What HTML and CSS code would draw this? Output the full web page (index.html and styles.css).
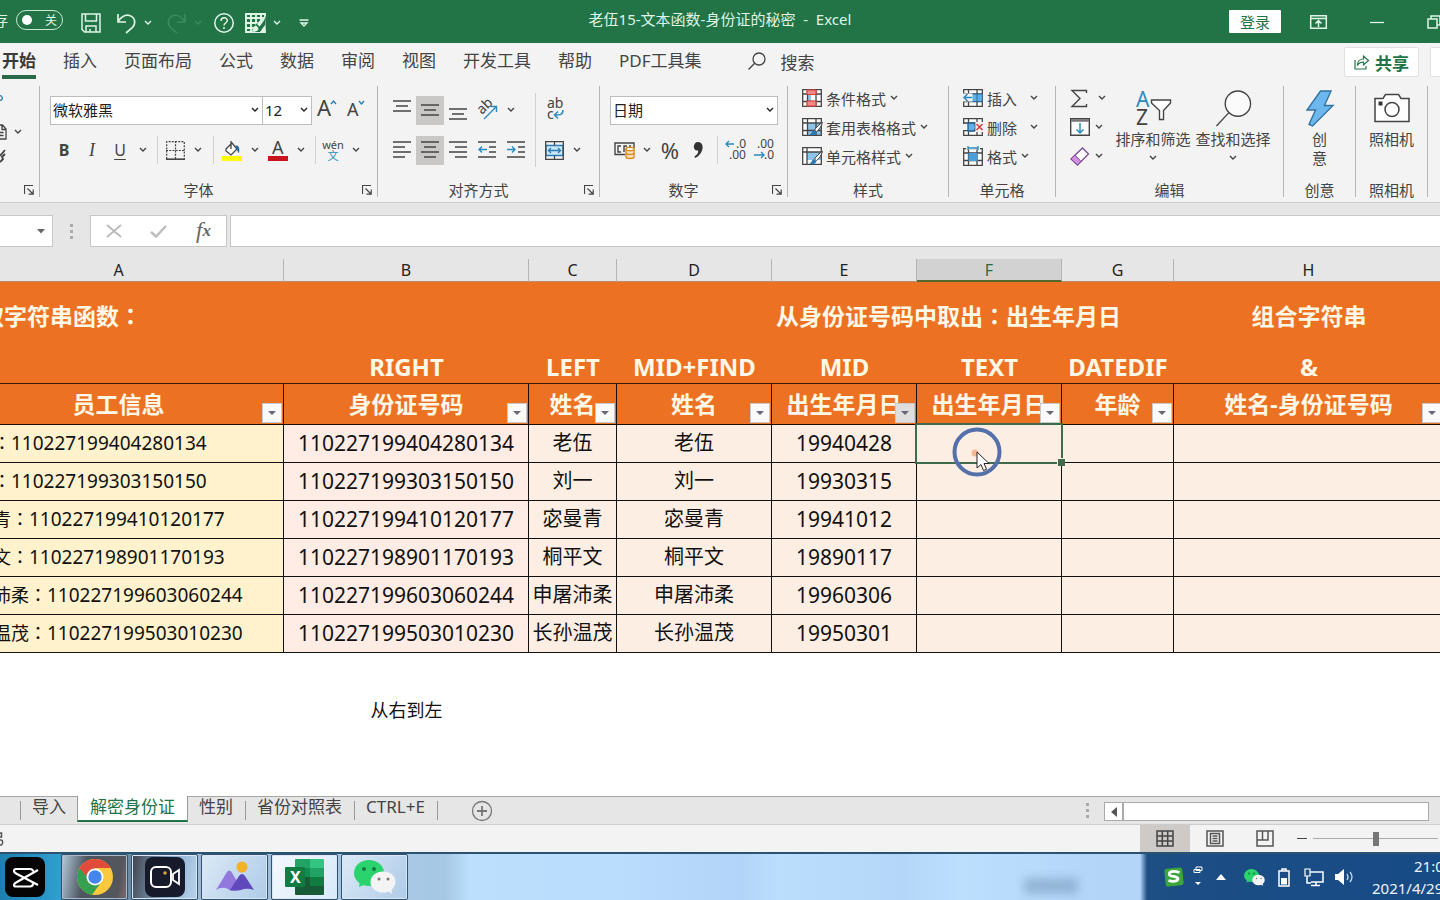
FILE: index.html
```html
<!DOCTYPE html>
<html lang="zh-CN">
<head>
<meta charset="utf-8">
<title>老伍15-文本函数-身份证的秘密 - Excel</title>
<link rel="stylesheet" href="styles.css">
</head>
<body>
<svg class="defs" aria-hidden="true">
  <symbol id="chev" viewBox="0 0 8 6"><path d="M1 1l3 3 3-3" fill="none" stroke="currentColor" stroke-width="1.4"/></symbol>
  <symbol id="launch" viewBox="0 0 10 10"><path d="M.5 9V.5H9M3.5 3.5l5 5M9.200 4.500V9.200H4.500" fill="none" stroke="currentColor" stroke-width="1.2"/></symbol>
  <symbol id="grid" viewBox="0 0 20 18"><path d="M.7 .7h18.600v16.600H.7zM.7 5h18.600M.7 12.500h18.600M5.500 .7v16.600M14 .7v16.600" fill="none" stroke="#444" stroke-width="1.300"/></symbol>
  <symbol id="brush" viewBox="0 0 14 14"><path d="M13.500.5c-3 1.500-6.500 5-8 7.500l2 1.800c2.500-2 5-6 6-9.300z" fill="#fff" stroke="#444"/><path d="M5 8.200c-2.500 0-1.500 3-4.500 4.300 2.500 1.500 6.500.8 6.800-2.500z" fill="#2b7bb9"/></symbol>
  <symbol id="wechat" viewBox="0 0 42 34"><ellipse cx="15" cy="13" rx="15" ry="13" fill="#2bd36f"/><path d="M6 21l-1 6 7-3z" fill="#2bd36f"/><circle cx="10" cy="9" r="2" fill="#187a41"/><circle cx="20" cy="9" r="2" fill="#187a41"/><ellipse cx="29" cy="22" rx="12.500" ry="10.500" fill="#f4f4f4"/><path d="M33 30l5 4-1-7z" fill="#f4f4f4"/><circle cx="25" cy="19" r="1.500" fill="#777"/><circle cx="34" cy="19" r="1.500" fill="#777"/></symbol>
</svg>

<header class="titlebar">
  <div class="quick">
    <span class="autosave">存</span>
    <button class="toggle" aria-label="自动保存"><i></i>关</button>
    <button class="qb save" aria-label="保存"><svg width="20" height="20" viewBox="0 0 20 20" fill="none" stroke="currentColor" stroke-width="1.500"><path d="M1 1h18v18H3.500L1 16.500zM4.500 1v7h11V1M5 19v-6h10v6M9 19v-3"/></svg></button>
    <button class="qb undo" aria-label="撤销"><svg width="19" height="21" viewBox="0 0 19 21" fill="none" stroke="currentColor" stroke-width="1.700"><path d="M1 1v8h8M1 8.500C5 3 9 1.500 12.500 2.500c6 2 6.500 8 3 12L9 20"/></svg></button>
    <button class="qc" aria-label="撤销列表"><svg width="8" height="6"><use href="#chev"/></svg></button>
    <button class="qb redo dim" aria-label="恢复"><svg width="19" height="21" viewBox="0 0 19 21" fill="none" stroke="currentColor" stroke-width="1.500"><path d="M18 1v8h-8M18 8.500C14 3 10 1.500 6.500 2.500c-6 2-6.500 8-3 12L10 20"/></svg></button>
    <button class="qc dim" aria-label="恢复列表"><svg width="8" height="6"><use href="#chev"/></svg></button>
    <button class="qb help" aria-label="帮助"><svg width="20" height="20" viewBox="0 0 20 20" fill="none" stroke="currentColor" stroke-width="1.500"><circle cx="10" cy="10" r="9.200"/><path d="M7 8c0-4.500 6.500-4 6.300-.5C13.200 10 10 10 10 12.500M10 14v2"/></svg></button>
    <button class="qb paint" aria-label="套用格式"><svg width="21" height="20" viewBox="0 0 21 20"><path d="M1 1h19v18H1zM1 5h19M1 10h19M1 15h19M6 1v18M11 1v18M16 1v18" fill="none" stroke="currentColor" stroke-width="1.900"/><path d="M21 3L10 12l-3 7h13z" fill="#227447"/><path d="M21 3c-4 2-7 5-9 8l2.500 2.500C17 11 19.500 7 21 3zM11 12.500c-3 .5-2 4-5 6 4 1 7.500 0 7.500-3.500zM15 19l5-7v7z" fill="currentColor"/></svg></button>
    <button class="qc" aria-label="更多格式"><svg width="8" height="6"><use href="#chev"/></svg></button>
    <button class="qb custom" aria-label="自定义快速访问工具栏"><svg width="10" height="8" viewBox="0 0 10 8" fill="none" stroke="currentColor" stroke-width="1.300"><path d="M.5 1h9M2 4l3 3 3-3z"/></svg></button>
  </div>
  <h1 class="doc">老伍15-文本函数-身份证的秘密&nbsp; -&nbsp; Excel</h1>
  <div class="window">
    <button class="login">登录</button>
    <button class="wb" aria-label="功能区显示选项"><svg width="17" height="14" viewBox="0 0 17 14" fill="none" stroke="currentColor" stroke-width="1.500"><path d="M.7 .7h15.600v12.600H.7zM.7 3.500h15.600M8.500 12V6M5.500 8.500l3-3 3 3"/></svg></button>
    <button class="wb" aria-label="最小化"><svg width="14" height="14" viewBox="0 0 14 14"><path d="M0 7.500h14" stroke="currentColor" stroke-width="1.300"/></svg></button>
    <button class="wb" aria-label="还原"><svg width="14" height="14" viewBox="0 0 14 14" fill="none" stroke="currentColor" stroke-width="1.500"><path d="M1 4h9v9H1zM4 4V1h9v9h-3"/></svg></button>
  </div>
</header>

<nav class="tabs">
  <a class="tab on" href="#">开始</a><a class="tab" href="#">插入</a><a class="tab" href="#">页面布局</a><a class="tab" href="#">公式</a><a class="tab" href="#">数据</a><a class="tab" href="#">审阅</a><a class="tab" href="#">视图</a><a class="tab" href="#">开发工具</a><a class="tab" href="#">帮助</a><a class="tab" href="#">PDF工具集</a>
  <button class="search"><svg width="18" height="18" viewBox="0 0 18 18" fill="none" stroke="currentColor" stroke-width="1.300"><circle cx="11" cy="7" r="6"/><path d="M6.700 11.300L.5 17.500"/></svg>搜索</button>
  <button class="share"><svg width="15" height="15" viewBox="0 0 15 15" fill="none" stroke="currentColor" stroke-width="1.200"><path d="M1 5v9h11v-3M3.500 10c0-4 3-6 6-6V1l5 4.500-5 4.500V7C7 7 5 8 3.500 10z"/></svg>共享</button>
  <button class="comment" aria-label="批注"></button>
</nav>

<section class="ribbon">
  <div class="group g-clip">
    <div class="rows three">
      <button class="cut" aria-label="剪切"><svg width="4" height="6" viewBox="0 0 4 6"><circle cx="0" cy="3" r="2.300" fill="none" stroke="#2b7bb9" stroke-width="1.300"/></svg></button>
      <button class="copy" aria-label="复制"><svg width="7" height="16" viewBox="0 0 7 16" fill="none" stroke="#444" stroke-width="1.300"><path d="M-2 1h4.500L6 5v10h-8M2 1v4.500h4M-1 8.500h4.500M-1 11.500h4.500"/></svg><svg class="chev" width="8" height="6"><use href="#chev"/></svg></button>
      <button class="cut" aria-label="格式刷"><svg width="6" height="14" viewBox="0 0 6 14"><path d="M5 1L0 7M5 5L2 8l1 2-3 3" fill="none" stroke="#444" stroke-width="1.800"/></svg></button>
    </div>
    <div class="foot"><span></span><button aria-label="剪贴板设置"><svg width="10" height="10"><use href="#launch"/></svg></button></div>
  </div>

  <div class="group g-font">
    <div class="rows two">
      <div class="row">
        <label class="combo face"><select aria-label="字体"><option>微软雅黑</option></select><svg width="8" height="6"><use href="#chev"/></svg></label>
        <label class="combo size"><select aria-label="字号"><option>12</option></select><svg width="8" height="6"><use href="#chev"/></svg></label>
        <button class="b30" aria-label="增大字号"><svg width="20" height="22" viewBox="0 0 20 22"><text x="0" y="17" font-size="22" fill="#444">A</text><path d="M14 5l2.500-3L19 5" fill="none" stroke="#2b7bb9" stroke-width="1.400"/></svg></button>
        <button class="b28" aria-label="减小字号"><svg width="18" height="22" viewBox="0 0 18 22"><text x="0" y="17" font-size="18" fill="#444">A</text><path d="M12 2l2.500 3L17 2" fill="none" stroke="#2b7bb9" stroke-width="1.400"/></svg></button>
      </div>
      <div class="row">
        <button class="b28 bold">B</button><button class="b28 ital">I</button><button class="b28 under">U</button>
        <button class="b18" aria-label="下划线"><svg width="8" height="6"><use href="#chev"/></svg></button><i class="sep"></i>
        <button class="b26" aria-label="边框"><svg width="19" height="19" viewBox="0 0 19 19" fill="none" stroke="#444"><path d="M.7 18V.7h17.600V18M9.500 0v18M0 9.500h19" stroke-dasharray="2 1.200" stroke-width="1.200"/><path d="M0 18.200h19" stroke-width="1.600"/></svg></button>
        <button class="b20" aria-label="边框列表"><svg width="8" height="6"><use href="#chev"/></svg></button><i class="sep"></i>
        <button class="b28" aria-label="填充颜色"><svg width="20" height="21" viewBox="0 0 20 21"><path d="M4 9l6-6 5 6-6 6-5-4zM9 9V1" fill="#fff" stroke="#444" stroke-width="1.300"/><path d="M13 6c4-2 5 3 4 7-2-1-2-5-4-7z" fill="#2b6ca3"/><path d="M0 16h20v5H0z" fill="#fdf90c"/></svg></button>
        <button class="b18" aria-label="填充颜色列表"><svg width="8" height="6"><use href="#chev"/></svg></button>
        <button class="b28" aria-label="字体颜色"><svg width="20" height="21" viewBox="0 0 20 21"><text x="4" y="14" font-size="18" fill="#444">A</text><path d="M0 16h20v5H0z" fill="#c8141c"/></svg></button>
        <button class="b18" aria-label="字体颜色列表"><svg width="8" height="6"><use href="#chev"/></svg></button><i class="sep"></i>
        <button class="b26 pinyin"><span>wén</span><b>文</b></button>
        <button class="b20" aria-label="拼音列表"><svg width="8" height="6"><use href="#chev"/></svg></button>
      </div>
    </div>
    <div class="foot"><span>字体</span><button aria-label="字体设置"><svg width="10" height="10"><use href="#launch"/></svg></button></div>
  </div>

  <div class="group g-align">
    <div class="split">
      <div class="rows two">
        <div class="row">
          <button class="b28" aria-label="顶端对齐"><svg width="18" height="20" viewBox="0 0 18 20" stroke="#444" stroke-width="1.400"><path d="M0 1h18M3 6h12M0 11h18"/></svg></button>
          <button class="b28 sel" aria-label="垂直居中"><svg width="18" height="20" viewBox="0 0 18 20" stroke="#444" stroke-width="1.400"><path d="M0 5h18M3 10h12M0 15h18"/></svg></button>
          <button class="b28" aria-label="底端对齐"><svg width="18" height="20" viewBox="0 0 18 20" stroke="#444" stroke-width="1.400"><path d="M0 9h18M3 14h12M0 19h18"/></svg></button>
          <button class="b30" aria-label="方向"><svg width="22" height="22" viewBox="0 0 22 22"><text transform="translate(6 16) rotate(-45)" font-size="14" fill="#444">ab</text><path d="M8 20L20 8M15 7.500h5.500V13" fill="none" stroke="#2b8ac0" stroke-width="1.400"/></svg></button>
          <button class="b18" aria-label="方向列表"><svg width="8" height="6"><use href="#chev"/></svg></button>
        </div>
        <div class="row">
          <button class="b28" aria-label="左对齐"><svg width="18" height="18" viewBox="0 0 18 18" stroke="#444" stroke-width="1.400"><path d="M0 1h18M0 6h12M0 11h18M0 16h12"/></svg></button>
          <button class="b28 sel" aria-label="居中"><svg width="18" height="18" viewBox="0 0 18 18" stroke="#444" stroke-width="1.400"><path d="M0 1h18M3 6h12M0 11h18M3 16h12"/></svg></button>
          <button class="b28" aria-label="右对齐"><svg width="18" height="18" viewBox="0 0 18 18" stroke="#444" stroke-width="1.400"><path d="M0 1h18M6 6h12M0 11h18M6 16h12"/></svg></button>
          <button class="b30" aria-label="减少缩进"><svg width="18" height="18" viewBox="0 0 18 18" fill="none" stroke="#444" stroke-width="1.400"><path d="M0 1h18M11 6h7M11 11h7M0 16h18"/><path d="M9 8.500H1M4 5.500l-3 3 3 3" stroke="#2b8ac0"/></svg></button>
          <button class="b28" aria-label="增加缩进"><svg width="18" height="18" viewBox="0 0 18 18" fill="none" stroke="#444" stroke-width="1.400"><path d="M0 1h18M11 6h7M11 11h7M0 16h18"/><path d="M0 8.500h8M5 5.500l3 3-3 3" stroke="#2b8ac0"/></svg></button>
        </div>
      </div>
      <i class="sep tall"></i>
      <div class="rows two">
        <div class="row"><button class="b30" aria-label="自动换行"><svg width="20" height="22" viewBox="0 0 20 22"><text x="2" y="9" font-size="14" fill="#444">ab</text><text x="2" y="20" font-size="14" fill="#444">c</text><path d="M18 11c0 5-3 5-8 5M13 12.500L9.500 16l3.500 3.500" fill="none" stroke="#2b8ac0" stroke-width="1.500"/></svg></button></div>
        <div class="row"><button class="b28" aria-label="合并后居中"><svg width="19" height="19" viewBox="0 0 19 19" fill="none" stroke="#444" stroke-width="1.300"><path d="M1 4.500h17v10H1z" fill="#c9e6f5" stroke="#2b7bb9"/><path d="M.7 .7h17.600v17.600H.7zM9.500 .7v3.800M9.500 14.500v3.800"/><path d="M3.500 9.500h12M6 7L3.500 9.500 6 12M13 7l2.500 2.500L13 12" stroke="#2b7bb9"/></svg></button><button class="b18" aria-label="合并列表"><svg width="8" height="6"><use href="#chev"/></svg></button></div>
      </div>
    </div>
    <div class="foot"><span>对齐方式</span><button aria-label="对齐设置"><svg width="10" height="10"><use href="#launch"/></svg></button></div>
  </div>

  <div class="group g-num">
    <div class="rows two">
      <div class="row"><label class="combo fmt"><select aria-label="数字格式"><option>日期</option></select><svg width="8" height="6"><use href="#chev"/></svg></label></div>
      <div class="row">
        <button class="b28" aria-label="会计数字格式"><svg width="21" height="18" viewBox="0 0 21 18" fill="none" stroke="#444" stroke-width="1.400"><path d="M11 13.500H1V2h19v5M7 5H4v6h3M10 11V5h3M15 5h2"/><path d="M12 8v8c0 2 8 2 8 0V8z" fill="#fce3bd" stroke="#d98b25"/><ellipse cx="16" cy="8" rx="4" ry="1.700" fill="#fff" stroke="#d98b25"/><path d="M12 12c0 2 8 2 8 0" stroke="#d98b25"/></svg></button>
        <button class="b18" aria-label="会计格式列表"><svg width="8" height="6"><use href="#chev"/></svg></button>
        <button class="b28 pct">%</button>
        <button class="b28" aria-label="千位分隔样式"><svg width="10" height="18" viewBox="0 0 10 18"><path d="M5 1c7 0 6 12-3 16l-.5-1.500C5 13 5.500 11 5 9.500-1 10 0 1 5 1z" fill="#333"/></svg></button><i class="sep"></i>
        <button class="b28" aria-label="增加小数位数"><svg width="22" height="22" viewBox="0 0 22 22"><text x="11" y="9" font-size="12" fill="#444">.0</text><text x="4" y="20" font-size="12" fill="#444">.00</text><path d="M9 5H1M4 2L1 5l3 3" fill="none" stroke="#2b8ac0" stroke-width="1.400"/></svg></button>
        <button class="b28" aria-label="减少小数位数"><svg width="22" height="22" viewBox="0 0 22 22"><text x="4" y="9" font-size="12" fill="#444">.00</text><text x="11" y="20" font-size="12" fill="#444">.0</text><path d="M1 16h10M8 13l3 3-3 3" fill="none" stroke="#2b8ac0" stroke-width="1.400"/></svg></button>
      </div>
    </div>
    <div class="foot"><span>数字</span><button aria-label="数字设置"><svg width="10" height="10"><use href="#launch"/></svg></button></div>
  </div>

  <div class="group g-style">
    <div class="rows three">
      <button class="item"><svg width="20" height="18" viewBox="0 0 20 18"><path d="M1 1h18v16H1z" fill="#fff"/><path d="M5.500 5h3.500v7.500H5.500z" fill="#8cc4ea"/><use href="#grid"/><path d="M5 1h9v4.500H5zM5 12h9v5H5z" fill="#f08a86" stroke="#d9403c" stroke-width="1.200"/></svg>条件格式<svg width="8" height="6"><use href="#chev"/></svg></button>
      <button class="item"><svg width="20" height="18" viewBox="0 0 20 18"><path d="M1 1h18v16H1z" fill="#fff"/><path d="M5 5h14v12H5z" fill="#8cc4ea"/><use href="#grid"/><use href="#brush" x="7" y="4" width="14" height="14"/></svg>套用表格格式<svg width="8" height="6"><use href="#chev"/></svg></button>
      <button class="item"><svg width="20" height="18" viewBox="0 0 20 18"><path d="M1 1h18v16H1z" fill="#fff"/><path d="M5 5h14v8H5z" fill="#8cc4ea"/><path d="M.7 .7h18.600v16.600H.7zM.7 5h18.600M5 .7v16.600" fill="none" stroke="#444" stroke-width="1.300"/><use href="#brush" x="7" y="4" width="14" height="14"/></svg>单元格样式<svg width="8" height="6"><use href="#chev"/></svg></button>
    </div>
    <div class="foot"><span>样式</span></div>
  </div>

  <div class="group g-cell">
    <div class="rows three">
      <button class="item wide"><svg width="20" height="18" viewBox="0 0 20 18"><path d="M1 1h18v16H1z" fill="#fff"/><use href="#grid"/><path d="M8 5h11.300v7.500H8z" fill="#5fb0e6" stroke="#2b6ca3"/><path d="M14 5v7.500" stroke="#2b6ca3"/><path d="M0 4.500h9.500v8H0z" fill="#f3f3f3"/><path d="M9 8.500H1M4.500 5L1 8.500 4.500 12" fill="none" stroke="#2b8ac0" stroke-width="1.500"/></svg>插入<svg width="8" height="6"><use href="#chev"/></svg></button>
      <button class="item wide"><svg width="20" height="18" viewBox="0 0 20 18"><path d="M1 1h18v16H1z" fill="#fff"/><use href="#grid"/><path d="M0 6h5v6H0z" fill="#f3f3f3"/><path d="M5 5h6l2 4-2 4H5z" fill="#5fb0e6" stroke="#235f8f" stroke-width="1.300"/><path d="M12.500 4H20v10h-7.500z" fill="#f3f3f3"/><path d="M13.500 6l6 6M19.500 6l-6 6" stroke="#df3b3b" stroke-width="1.500"/></svg>删除<svg width="8" height="6"><use href="#chev"/></svg></button>
      <button class="item"><svg width="20" height="20" viewBox="0 0 20 20"><path d="M1 4h18v15H1z" fill="#fff"/><use href="#grid" y="2" width="20" height="18"/><path d="M5.500 7h9v8h-9z" fill="#4a9fdb"/><path d="M3 0h14v3.500H3z" fill="#f3f3f3"/><path d="M5 2h10M5 0v4M15 0v4" stroke="#2b8ac0" stroke-width="1.300"/></svg>格式<svg width="8" height="6"><use href="#chev"/></svg></button>
    </div>
    <div class="foot"><span>单元格</span></div>
  </div>

  <div class="group g-edit">
    <div class="split">
      <div class="rows three">
        <button class="item sum" aria-label="自动求和"><svg width="18" height="19" viewBox="0 0 18 19"><path d="M16.500 4V1.500H2L10 9.500 2 17.500h14.500V15" fill="none" stroke="#444" stroke-width="1.400"/></svg><svg width="8" height="6"><use href="#chev"/></svg></button>
        <button class="item" aria-label="填充"><svg width="20" height="18" viewBox="0 0 20 18" fill="none"><path d="M.7 .7h18.600v16.600H.7z" fill="#fff" stroke="#444" stroke-width="1.400"/><path d="M1 2.500h18" stroke="#777" stroke-width="2.500"/><path d="M10 5v10M6.500 11.500L10 15l3.500-3.500" stroke="#2b8ac0" stroke-width="1.500"/></svg><svg width="8" height="6"><use href="#chev"/></svg></button>
        <button class="item" aria-label="清除"><svg width="20" height="19" viewBox="0 0 20 19"><path d="M1 12L12.500 1l6 6L7.500 18z" fill="#fff" stroke="#7a4d92" stroke-width="1.300"/><path d="M1 12l4-4 6 6.500-3.500 3.500z" fill="#d28fe0" stroke="#7a4d92"/></svg><svg width="8" height="6"><use href="#chev"/></svg></button>
      </div>
      <button class="big"><svg width="37" height="36" viewBox="0 0 37 36"><text x="1" y="16" font-size="21" fill="#2b8ac0">A</text><text x="1" y="34" font-size="21" fill="#444">Z</text><path d="M16.500 9.500h19v3l-7 7.500v9h-4v-9l-8-7.500z" fill="#fff" stroke="#444" stroke-width="1.400"/></svg>排序和筛选<svg width="8" height="6"><use href="#chev"/></svg></button>
      <button class="big"><svg width="37" height="38" viewBox="0 0 37 38" fill="none" stroke="#444" stroke-width="1.400"><circle cx="23" cy="14" r="13" fill="#fbfbfb"/><path d="M14 23L1 37"/></svg>查找和选择<svg width="8" height="6"><use href="#chev"/></svg></button>
    </div>
    <div class="foot"><span>编辑</span></div>
  </div>

  <div class="group g-idea">
    <button class="big"><svg width="28" height="37" viewBox="0 0 28 37"><path d="M14.500 1H25l-6.500 14.500H27L6.500 36 3 34.500 9.500 20H1z" fill="#6cb8ee" stroke="#33739f" stroke-width="1.400"/></svg>创<br>意</button>
    <div class="foot"><span>创意</span></div>
  </div>

  <div class="group g-cam">
    <button class="big"><svg width="36" height="30" viewBox="0 0 36 30" fill="none" stroke="#444" stroke-width="1.500"><path d="M1 5h8l2.500-4h13L27 5h8v23H1z" fill="#fff"/><circle cx="18" cy="16" r="7"/><path d="M4.500 8h4v4h-4z" fill="#333" stroke="none"/></svg>照相机</button>
    <div class="foot"><span>照相机</span></div>
  </div>
</section>

<section class="formula">
  <button class="name" aria-label="名称框"><svg width="8" height="5" viewBox="0 0 8 5"><path d="M0 0h8L4 4.500z" fill="#666"/></svg></button>
  <span class="dots"><i></i><i></i><i></i></span>
  <div class="fx">
    <button aria-label="取消"><svg width="16" height="14" viewBox="0 0 16 14"><path d="M1 1l14 12M15 1L1 13" stroke="#b9b9b9" stroke-width="1.800"/></svg></button>
    <button aria-label="输入"><svg width="17" height="13" viewBox="0 0 17 13"><path d="M1 7l5 4.500L16 1" fill="none" stroke="#bdbdbd" stroke-width="2.500"/></svg></button>
    <button class="fn"><i>f</i>x</button>
  </div>
  <input class="bar" type="text" aria-label="编辑栏">
</section>

<main class="sheet">
  <table>
    <colgroup><col class="ca"><col class="cb"><col class="cc"><col class="cd"><col class="ce"><col class="ce"><col class="cg"><col></colgroup>
    <thead>
      <tr class="letters"><th>A</th><th>B</th><th>C</th><th>D</th><th>E</th><th class="cur">F</th><th>G</th><th>H</th></tr>
    </thead>
    <tbody>
      <tr class="t1"><td class="left" colspan="4">提取字符串函数<span class="colon" lang="zh-TW">：</span></td><td class="left" colspan="3">从身份证号码中取出<span class="colon" lang="zh-TW">：</span>出生年月日</td><td>组合字符串</td></tr>
      <tr class="t2"><td></td><td>RIGHT</td><td>LEFT</td><td>MID+FIND</td><td>MID</td><td>TEXT</td><td>DATEDIF</td><td>&amp;</td></tr>
      <tr class="t3">
        <td>员工信息<button class="filter" aria-label="筛选"></button></td><td>身份证号码<button class="filter" aria-label="筛选"></button></td><td>姓名<button class="filter" aria-label="筛选"></button></td><td>姓名<button class="filter" aria-label="筛选"></button></td><td>出生年月日<button class="filter hot" aria-label="筛选"></button></td><td>出生年月日<button class="filter" aria-label="筛选"></button></td><td>年龄<button class="filter" aria-label="筛选"></button></td><td>姓名-身份证号码<button class="filter" aria-label="筛选"></button></td>
      </tr>
      <tr class="d"><td>老伍<span class="colon" lang="zh-TW">：</span><span class="n">110227199404280134</span></td><td>110227199404280134</td><td>老伍</td><td>老伍</td><td>19940428</td>
        <td><div class="selection"></div><svg class="pointer" width="50" height="50" viewBox="0 0 50 50"><circle cx="25" cy="25" r="22.500" fill="none" stroke="#5470aa" stroke-width="4"/><circle cx="23" cy="26" r="3.500" fill="#f5b795"/><path d="M25 25v16l4-3.500 2.500 6 3-1.300-2.500-5.700h5z" fill="#fff" stroke="#222"/></svg></td><td></td><td></td></tr>
      <tr class="d"><td>刘一<span class="colon" lang="zh-TW">：</span><span class="n">110227199303150150</span></td><td>110227199303150150</td><td>刘一</td><td>刘一</td><td>19930315</td><td></td><td></td><td></td></tr>
      <tr class="d"><td>宓曼青<span class="colon" lang="zh-TW">：</span><span class="n">110227199410120177</span></td><td>110227199410120177</td><td>宓曼青</td><td>宓曼青</td><td>19941012</td><td></td><td></td><td></td></tr>
      <tr class="d"><td>桐平文<span class="colon" lang="zh-TW">：</span><span class="n">110227198901170193</span></td><td>110227198901170193</td><td>桐平文</td><td>桐平文</td><td>19890117</td><td></td><td></td><td></td></tr>
      <tr class="d"><td>申屠沛柔<span class="colon" lang="zh-TW">：</span><span class="n">110227199603060244</span></td><td>110227199603060244</td><td>申屠沛柔</td><td>申屠沛柔</td><td>19960306</td><td></td><td></td><td></td></tr>
      <tr class="d"><td>长孙温茂<span class="colon" lang="zh-TW">：</span><span class="n">110227199503010230</span></td><td>110227199503010230</td><td>长孙温茂</td><td>长孙温茂</td><td>19950301</td><td></td><td></td><td></td></tr>
      <tr class="blank"><td colspan="8"></td></tr>
      <tr class="blank"><td></td><td>从右到左</td><td colspan="6"></td></tr>
    </tbody>
  </table>
</main>

<nav class="sheets">
  <span class="edge"></span>
  <a href="#">导入</a><a class="on" href="#">解密身份证</a><a class="rule" href="#">性别</a><a class="rule" href="#">省份对照表</a><a class="rule" href="#">CTRL+E</a>
  <button class="add" aria-label="新工作表"><svg width="22" height="22" viewBox="0 0 22 22" fill="none" stroke="#777" stroke-width="1.300"><circle cx="11" cy="11" r="9.500"/><path d="M11 6v10M6 11h10" stroke-width="1.800"/></svg></button>
  <span class="dots"><i></i><i></i><i></i></span>
  <div class="hscroll"><button aria-label="向左滚动"><svg width="6" height="10" viewBox="0 0 6 10"><path d="M6 0v10L0 5z" fill="#555"/></svg></button><div class="thumb"></div></div>
</nav>

<footer class="status">
  <svg class="macro" width="4" height="16" viewBox="0 0 4 16"><path d="M0 2h1.500v4H0M0 9c4-1 3 6 0 5" fill="none" stroke="#555" stroke-width="1.500"/></svg>
  <button class="view on" aria-label="普通"><svg width="18" height="17" viewBox="0 0 18 17" fill="none" stroke="#444" stroke-width="1.500"><path d="M1 1h16v15H1zM1 6h16M1 11h16M6.300 1v15M11.700 1v15"/></svg></button>
  <button class="view" aria-label="页面布局"><svg width="18" height="17" viewBox="0 0 18 17" fill="none" stroke="#555" stroke-width="1.500"><path d="M1 1h16v15H1zM4.500 3.500h9v10h-9zM6.500 6h5M6.500 8.500h5M6.500 11h5"/></svg></button>
  <button class="view" aria-label="分页预览"><svg width="18" height="17" viewBox="0 0 18 17" fill="none" stroke="#555" stroke-width="1.500"><path d="M1 1h16v15H1zM1 10h11V1M6.500 1v9"/></svg></button>
  <button class="minus" aria-label="缩小"></button>
  <input class="zoom" type="range" min="0" max="100" value="50" aria-label="缩放">
</footer>

<footer class="taskbar">
  <button class="app first" aria-label="剪映"><svg width="40" height="40" viewBox="0 0 40 40"><rect width="40" height="40" rx="8" fill="#050505"/><path d="M33 13L12 25q-3 1.500-3 3 0 1.500 2 1.500h14q3 0 3-3M33 28L12 17q-3-1.500-3-3 0-2 2-2h14q3 0 3 2.500" fill="none" stroke="#fff" stroke-width="2.200"/></svg></button>
  <button class="app dark" aria-label="Chrome"><svg width="36" height="38" viewBox="0 0 36 36"><circle cx="18" cy="18" r="18" fill="#fbc93b"/><path d="M18 18L2.400 9A18 18 0 0 0 15 35.800L25 22z" fill="#35a04f"/><path d="M2.400 9A18 18 0 0 1 33.600 9H18l-8 9z" fill="#e14b3c"/><circle cx="18" cy="18" r="8.500" fill="#fff"/><circle cx="18" cy="18" r="6.700" fill="#4485ee"/></svg></button>
  <button class="app mid" aria-label="录屏"><svg width="40" height="40" viewBox="0 0 40 40"><rect width="40" height="40" rx="8" fill="#171a2b"/><rect x="6" y="10" width="20" height="20" rx="5" fill="none" stroke="#fff" stroke-width="2"/><path d="M28 17l6-4v14l-6-4z" fill="none" stroke="#fff" stroke-width="1.800"/><circle cx="20" cy="16" r="1.800" fill="#d9a33c"/></svg></button>
  <button class="app" aria-label="图片"><svg width="38" height="32" viewBox="0 0 38 32"><circle cx="26" cy="6" r="5.500" fill="#efb228"/><path d="M0 29l11-18q2-3 4.500 0L26 29q-5-4-8 0-3 2-6-1-6-3-12 1z" fill="#9277dd"/><path d="M14 29l9-14q3-4 6 0l9 14q-5-2-10-1-7 3-14 1z" fill="#6049bd"/></svg></button>
  <button class="app lit" aria-label="Excel"><svg width="40" height="36" viewBox="0 0 40 36"><path d="M10 1q0-1 1-1h14v18H10z" fill="#22a366"/><path d="M25 0h13q1 0 1 1v8H25z" fill="#33c481"/><path d="M25 9h14v9H25z" fill="#22a366"/><path d="M10 9h15v9H10z" fill="#138a50"/><path d="M10 18h15v9H10z" fill="#185c37"/><path d="M25 18h14v9H25z" fill="#107c41"/><path d="M10 27h29v8q0 1-1 1H11q-1 0-1-1z" fill="#185c37"/><rect y="8" width="20" height="20" rx="1" fill="#107c41"/><text x="5" y="24" font-size="16" font-weight="700" fill="#fff">X</text></svg></button>
  <button class="app" aria-label="微信"><svg width="42" height="34"><use href="#wechat"/></svg></button>
  <div class="haze"></div>
  <div class="tray">
    <svg width="20" height="20" viewBox="0 0 20 20"><rect x="1" y="1" width="18" height="18" rx="3" fill="#3ba63a" transform="rotate(-6 10 10)"/><path d="M15.500 5.500C9 3 4 5 5.500 8c1.500 2 8 .5 8.500 3.500 0 3-5 3.500-9.500 2" fill="none" stroke="#fff" stroke-width="2.800"/></svg>
    <svg class="tiny" width="10" height="22" viewBox="0 0 10 22" fill="none" stroke="#fff"><path d="M3 1h6v3.500H3zM1 3.500h6v3H1z"/><path d="M2 16h6l-3 3z" fill="#fff" stroke="none"/></svg>
    <svg width="10" height="6" viewBox="0 0 10 6"><path d="M0 6l5-6 5 6z" fill="#fff"/></svg>
    <svg class="we" width="21" height="17"><use href="#wechat"/></svg>
    <svg width="12" height="19" viewBox="0 0 12 19"><path d="M1 3h10v15H1zM4 3V1h4v2" fill="none" stroke="#fff" stroke-width="1.500"/><path d="M3 10h6v6.500H3z" fill="#fff"/></svg>
    <svg width="20" height="19" viewBox="0 0 20 19"><path d="M6 4h13v10H7M12 14v3M7 17.500h9M3 8v7h4" fill="none" stroke="#fff" stroke-width="1.500"/><path d="M1 1h5v7H1z" fill="#1d4e84" stroke="#fff" stroke-width="1.200"/></svg>
    <svg width="20" height="18" viewBox="0 0 20 18"><path d="M1 6h3l6-5v16l-6-5H1z" fill="#fff"/><path d="M13 6q2 3 0 6M16 4q4 5 0 10" fill="none" stroke="#c7d6e8" stroke-width="1.300"/></svg>
    <div class="clock"><span>21:0</span><span>2021/4/29</span></div>
  </div>
</footer>
</body>
</html>
```

FILE: styles.css
```css
* { box-sizing: border-box; }
html, body { height: 100%; }
body {
  margin: 0;
  display: flex;
  flex-direction: column;
  overflow: hidden;
  background: #fff;
  color: #444;
  font-family: "Noto Sans", "Noto Sans CJK SC", sans-serif;
  font-size: 15px;
}
button, select, input { font: inherit; color: inherit; margin: 0; }
button { display: flex; align-items: center; justify-content: center; padding: 0; border: 0; background: none; flex: none; }
a { color: inherit; text-decoration: none; }
svg { display: block; flex: none; overflow: visible; }
.defs { position: absolute; width: 0; height: 0; }

/* title bar */
.titlebar {
  flex: none;
  height: 43px;
  display: grid;
  grid-template-columns: 1fr auto 1fr;
  background: #227447;
  color: #dff5e6;
  overflow: hidden;
}
.quick { display: flex; align-items: center; }
.quick > button { margin-top: 3px; }
.autosave { width: 8px; display: flex; justify-content: flex-end; margin: 0 8px 4px 0; white-space: nowrap; }
.quick .toggle {
  width: 47px; height: 20px; margin: 0 17px 4px 0; padding: 0 5px;
  justify-content: space-between;
  border: 1px solid #c9e8d4; border-radius: 10px; font-size: 12px;
}
.toggle i { width: 10px; height: 10px; border-radius: 5px; background: #fff; }
.qb { width: 22px; }
.undo { margin-left: 14px; width: 21px; }
.qc { width: 20px; padding-left: 2px; }
.redo { margin-left: 8px; }
.help { margin-left: 6px; }
.paint { margin-left: 9px; }
.custom { margin-left: 7px; }
.dim { color: #3d8a60; }
.doc { margin: 0; font-size: 15px; font-weight: 400; line-height: 38px; white-space: nowrap; }
.window { display: flex; align-items: center; justify-content: flex-end; gap: 43px; margin-right: -1px; }
.login { width: 52px; height: 23px; background: #fff; color: #227447; border-radius: 1px; margin-right: -14px; }

/* ribbon tabs */
.tabs { flex: none; height: 37px; padding-left: 2px; display: flex; align-items: flex-start; gap: 27px; background: #f3f3f3; font-size: 17px; overflow: hidden; white-space: nowrap; }
.tab { line-height: 32px; padding-top: 2px; height: 36px; }
.tab.on { font-weight: 700; border-bottom: 4px solid #2a6a4a; color: #3a3a3a; }
.search { gap: 15px; margin-left: 19px; height: 36px; }
.share { width: 75px; height: 30px; margin: 4px 0 0 auto; gap: 6px; background: #fff; border: 1px solid #e1e1e1; border-radius: 2px; color: #227447; font-weight: 700; }
.comment { width: 12px; height: 30px; margin: 4px -2px 0 -16px; background: #fff; border: 1px solid #e1e1e1; border-radius: 2px; }

/* ribbon */
.ribbon { flex: none; display: flex; padding: 6px 0; height: 123px; background: #f3f3f3; border-bottom: 1px solid #cfcfcf; overflow: hidden; }
.group { flex: none; height: 111px; display: flex; flex-direction: column; border-right: 1px solid #b5b5b5; }
.foot { margin-top: auto; height: 14px; display: flex; align-items: center; line-height: 14px; }
.foot span { flex: 1; text-align: center; white-space: nowrap; }
.foot button { width: 20px; height: 10px; }
.rows { display: flex; flex-direction: column; }
.rows.two { padding-top: 8px; gap: 8px; }
.rows.three { gap: 5px; }
.row { display: flex; height: 32px; align-items: center; }
.split { display: flex; }
.g-clip { width: 40px; }
.cut, .copy { height: 24px; justify-content: flex-start; }
.copy { padding-top: 10px; }
.copy .chev { margin-left: 7px; }
.g-font { width: 338px; padding-left: 10px; }
.g-align { width: 222px; padding-left: 10px; }
.g-num { width: 188px; padding-left: 10px; }
.g-style { width: 161px; padding-left: 14px; }
.g-cell { width: 107px; padding-left: 14px; }
.g-edit { width: 228px; padding-left: 14px; }
.g-idea, .g-cam { width: 72px; }
.g-font .foot, .g-align .foot, .g-num .foot { margin-left: -10px; }
.g-style .foot, .g-cell .foot, .g-edit .foot { margin-left: -14px; }

.combo { display: flex; align-items: center; height: 29px; background: #fff; border: 1px solid #bdbdbd; padding-right: 3px; color: #222; }
.combo select { appearance: none; flex: 1; min-width: 0; border: 0; background: none; padding: 0 2px; outline: 0; }
.face { width: 213px; }
.size { width: 49px; border-left: 0; }
.fmt { width: 168px; }

.b18 { width: 18px; } .b20 { width: 20px; } .b26 { width: 26px; } .b28 { width: 28px; } .b30 { width: 30px; }
.row > button { height: 29px; }
.sel { background: #cac8c6; }
.sep { width: 10px; height: 28px; flex: none; background: linear-gradient(#d0d0d0, #d0d0d0) center / 1px 100% no-repeat; }
.sep.tall { height: 74px; margin-top: 7px; }
.bold { font-weight: 700; font-size: 16px; }
.ital { font-style: italic; font-family: "Liberation Serif", serif; font-size: 18px; }
.under { text-decoration: underline; text-underline-offset: 3px; font-size: 16px; }
.pinyin { flex-direction: column; font-size: 11px; line-height: 11px; }
.pinyin b { font-weight: 400; color: #2b8ac0; }
.pct { font-size: 22px; }

.item { height: 24px; justify-content: flex-start; gap: 4px; white-space: nowrap; }
.item.wide svg:last-child { margin-left: 9px; }
.g-edit .item { gap: 5px; }
.g-edit .item.sum { gap: 10px; }
.big { flex-direction: column; justify-content: flex-start; line-height: 19px; width: 80px; height: 84px; white-space: nowrap; padding-top: 4px; }
.big svg:first-child { height: 37px; margin-bottom: 3px; }
.big svg:last-child:not(:first-child) { margin-top: 6px; }
.g-edit .big:nth-child(2) { margin-left: 7px; }
.g-idea .big, .g-cam .big { width: 71px; }

/* formula bar */
.formula { flex: none; height: 56px; padding: 12px 0; display: flex; background: #e7e6e6; }
.name { width: 53px; background: #fff; border: 1px solid #c6c6c6; border-left: 0; justify-content: flex-end; padding-right: 7px; }
.dots { width: 37px; display: flex; flex-direction: column; align-items: center; justify-content: center; gap: 3px; }
.dots i { width: 3px; height: 3px; background: #aaa; }
.fx { width: 137px; display: flex; background: #fff; border: 1px solid #c6c6c6; }
.fx button { width: 45px; }
.fx .fn { font: italic 700 17px "Liberation Serif", serif; color: #666; }
.fn i { font-size: 23px; font-weight: 400; }
.bar { flex: 1; min-width: 0; margin-left: 3px; background: #fff; border: 1px solid #c6c6c6; border-right: 0; outline: 0; }

/* worksheet */
.sheet { flex: 1; min-height: 0; overflow: hidden; background: #fff; }
table { table-layout: fixed; width: calc(100% + 50px); margin-left: -46px; border-spacing: 0; color: #111; }
.ca { width: 330px; } .cb { width: 245px; } .cc { width: 88px; } .cd { width: 155px; } .ce { width: 145px; } .cg { width: 112px; }
td, th { padding: 0; text-align: center; white-space: nowrap; position: relative; }
.letters th { height: 23px; line-height: 21px; padding-top: 1px; font-size: 16px; font-weight: 400; color: #222; background: #e7e6e6; border-right: 1px solid #b4b4b4; border-bottom: 1px solid #b98d6b; }
.letters .cur { line-height: 20px; background: #d2d2d2; color: #2a6a4a; border-bottom: 2px solid #55692f; }
.t1 td, .t2 td, .t3 td { background: #ed7122; color: #fff8e6; font-weight: 700; font-size: 23px; line-height: 30px; }
.t1 td { height: 70px; }
.t1 td, .t2 td { padding-bottom: 2px; }
.t2 td { height: 32px; font-size: 24px; line-height: 28px; border-bottom: 1px solid #3d1a0c; }
.t3 td { height: 41px; border-bottom: 1px solid #1c0d06; border-right: 1px solid #1c0d06; }
td.left { text-align: left; padding-left: 4px; }
.colon { font-family: "Noto Sans CJK TC", sans-serif; line-height: 1; }
.d td { height: 38px; line-height: 30px; padding-bottom: 2px; font-size: 20px; background: #fdeee3; border-right: 1px solid #111; border-bottom: 1px solid #111; }
.d td:first-child { background: #fff2cc; text-align: left; padding-left: 3px; font-size: 18px; }
.d td:nth-child(2) { background: #feece5; }
.d td:nth-child(2), .d td:nth-child(5) { font-size: 21px; }
.n { font-size: 19px; }
.blank td { height: 38px; font-size: 18px; line-height: 26px; }
.filter { position: absolute; right: 1px; bottom: 1px; width: 20px; height: 20px; background: #fafafa; border: 1px solid #c9c9c9; }
.filter::after { content: ""; border: 4px solid transparent; border-top-color: #667; border-bottom: 0; }
.filter.hot { background: #dedede; }
.selection { position: absolute; z-index: 1; inset: -2px; border: 2px solid #3f6b4c; }
.selection::after { content: ""; position: absolute; right: -4px; bottom: -4px; width: 7px; height: 7px; background: #3f6b4c; border: 1px solid #fdeee3; border-width: 1px 0 0 1px; }
.pointer { position: absolute; left: 35px; top: 2px; z-index: 2; }

/* sheet tabs */
.sheets { flex: none; height: 29px; display: flex; background: #e7e6e6; border-top: 1px solid #a5a5a5; border-bottom: 1px solid #cdcdcd; font-size: 17px; line-height: 19px; white-space: nowrap; }
.sheets .edge { width: 21px; height: 19px; margin-top: 4px; border-right: 1px solid #999; }
.sheets a { padding: 0 11px; height: 25px; }
.sheets a.on { background: #fff; color: #227447; border: 1px solid #999; border-width: 0 1px 2px; border-bottom-color: #227447; margin-top: -1px; padding: 1px 12px 0; height: 26px; }
.sheets .rule { position: relative; padding-right: 13px; }
.sheets .rule::after { content: ""; position: absolute; right: 0; top: 4px; height: 19px; border-right: 1px solid #999; }
.sheets .add { width: 24px; height: 28px; margin-left: 32px; }
.sheets .dots { margin-left: auto; width: 34px; }
.hscroll { width: 325px; height: 19px; margin: 5px 11px 0 0; display: flex; background: #fff; border: 1px solid #aaa; }
.hscroll button { width: 19px; border-right: 2px solid #aaa; }

/* status bar */
.status { flex: none; height: 27px; display: flex; align-items: center; background: #f3f3f3; }
.macro { margin-right: auto; }
.view { width: 50px; height: 27px; }
.view.on { background: #cdcac8; }
.minus { width: 10px; height: 16px; margin: 0 6px 0 7px; background: linear-gradient(#444, #444) center / 100% 1px no-repeat; }
.zoom { appearance: none; width: 125px; height: 16px; margin-right: 2px; background: linear-gradient(#aaa, #aaa) center / 100% 1px no-repeat; }
.zoom::-webkit-slider-thumb { appearance: none; width: 6px; height: 14px; background: #777; }

/* taskbar */
.taskbar { flex: none; height: 48px; display: flex; border-top: 2px solid #2c5272; background: linear-gradient(90deg, #1d7fb0 0, #2f9fd0 60px, #3c6078 64px, #9db8d4 200px, #a9c8e6 410px, #a6c8e4 445px, #bcdffd 470px, #badcfd 620px, #b2d4f8 740px, #bcdefd 780px, #b4d6f8 900px, #bddffe 960px, #b3d5f8 1100px); overflow: hidden; }
.app { width: 67px; margin-right: 3px; border: 1px solid #31536f; border-radius: 2px; background: linear-gradient(120deg, #dbe9f6, #aecbe8); box-shadow: inset 0 0 0 1px #d7e7f5; }
.app.first { width: 61px; margin-right: 0; padding-right: 11px; border: 0; background: none; box-shadow: none; }
.app.dark { background: linear-gradient(100deg, #b6cbdc, #4d5560 35%, #54565c 85%, #806c70); box-shadow: inset 0 0 0 1px #a9b9c8; }
.app.mid { background: linear-gradient(100deg, #3f434c, #8fb3d5 60%, #b9d2ea); }
.app.lit { background: linear-gradient(120deg, #f3f8fd, #d7e9f8); }
.haze { flex: 1; position: relative; }
.haze::after { content: ""; position: absolute; right: 62px; bottom: 6px; width: 54px; height: 16px; background: #7b9cbd; opacity: .6; filter: blur(5px); }
.tray { width: 300px; display: flex; align-items: center; padding-left: 24px; background: linear-gradient(90deg, #b3d5f8, #1d4e84 7px, #174b86); color: #eef5fc; }
.tray .tiny { margin: 0 13px 0 9px; }
.tray > svg + svg + svg { margin-right: 18px; }
.tray > svg.we { margin-right: 13px; }
.tray > svg.we + svg { margin-right: 14px; }
.tray > svg.we + svg + svg { margin-right: 10px; }
.clock { display: flex; flex-direction: column; line-height: 22px; font-size: 15px; white-space: nowrap; }
.clock span:first-child { padding-left: 42px; }
```
